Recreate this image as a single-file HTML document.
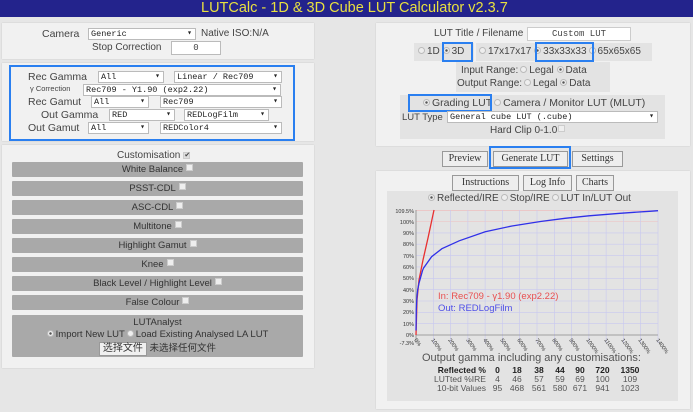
<!DOCTYPE html>
<html><head><meta charset="utf-8"><style>
*{box-sizing:border-box;margin:0;padding:0}
body{width:693px;height:412px;background:#e6e6e6;font-family:"Liberation Sans","Noto Sans CJK SC",sans-serif;font-size:10px;color:#444;position:relative;overflow:hidden}
.a{position:absolute;white-space:nowrap}
.hdr{left:0;top:0;width:693px;height:17px;background:#23238c}
.title{left:201px;top:0px;color:#e8e040;font-size:14.5px}
.pan{background:#f1f1f1;box-shadow:0 0 1px #bbb}
.sel{background:#fff;border:1px solid #bbb;font-family:"Liberation Mono",monospace;font-size:8.5px;color:#222;padding-left:2px;line-height:10px;height:12px}
.sel:after{content:"▾";position:absolute;right:3px;top:0;font-size:8px}
.blue{border:2px solid #2a7ff0}
.row{left:12px;width:291px;height:15px;background:#a9a9a9;text-align:center;line-height:15px;font-size:9.5px;color:#333;border-radius:1px}
.cb{display:inline-block;width:7px;height:7px;background:#eee;border:1px solid #ccc;margin-left:3px;vertical-align:1px}
.rd{display:inline-block;width:7px;height:7px;border-radius:50%;background:#eee;border:1px solid #bbb;margin-right:2px;vertical-align:0}
.rd.on{background:radial-gradient(#555 30%,#eee 40%)}
.btn{background:#eee;border:1px solid #999;font-family:"Liberation Serif",serif;font-size:10px;color:#333;text-align:center;line-height:14px;height:16px}
.gb{background:#e3e3e3}
</style></head><body>
<div class="a hdr"></div>
<div class="a title">LUTCalc - 1D &amp; 3D Cube LUT Calculator v2.3.7</div>

<div class="a pan" style="left:2px;top:23px;width:312px;height:36px"></div>
<div class="a" style="left:42px;top:28px;font-size:10.5px">Camera</div>
<div class="a sel" style="left:88px;top:28px;width:108px">Generic</div>
<div class="a" style="left:201px;top:28px;font-size:10px">Native ISO:N/A</div>
<div class="a" style="left:92px;top:42px;font-size:10px">Stop Correction</div>
<div class="a" style="left:171px;top:41px;width:50px;height:14px;background:#fff;border:1px solid #bbb;text-align:center;font-size:9px;font-family:'Liberation Mono',monospace;line-height:12px">0</div>

<div class="a pan" style="left:2px;top:63px;width:312px;height:78px"></div>
<div class="a blue" style="left:9px;top:65px;width:286px;height:76px"></div>
<div class="a" style="left:28px;top:71px;font-size:10.5px">Rec Gamma</div>
<div class="a sel" style="left:98px;top:71px;width:66px">All</div>
<div class="a sel" style="left:174px;top:71px;width:108px">Linear / Rec709</div>
<div class="a" style="left:30px;top:84px;font-size:7.5px">γ Correction</div>
<div class="a sel" style="left:83px;top:84px;width:198px">Rec709 - Y1.90 (exp2.22)</div>
<div class="a" style="left:28px;top:96px;font-size:10.5px">Rec Gamut</div>
<div class="a sel" style="left:91px;top:96px;width:58px">All</div>
<div class="a sel" style="left:160px;top:96px;width:122px">Rec709</div>
<div class="a" style="left:41px;top:109px;font-size:10.5px">Out Gamma</div>
<div class="a sel" style="left:109px;top:109px;width:66px">RED</div>
<div class="a sel" style="left:184px;top:109px;width:85px">REDLogFilm</div>
<div class="a" style="left:28px;top:122px;font-size:10.5px">Out Gamut</div>
<div class="a sel" style="left:88px;top:122px;width:61px">All</div>
<div class="a sel" style="left:160px;top:122px;width:122px">REDColor4</div>

<div class="a pan" style="left:2px;top:145px;width:312px;height:223px"></div>
<div class="a" style="left:117px;top:150px;font-size:10px">Customisation<span class="cb" style="background:#ddd;font-size:7px;line-height:5px;text-align:center">✔</span></div>
<div class="a row" style="top:162px">White Balance<span class="cb"></span></div>
<div class="a row" style="top:181px">PSST-CDL<span class="cb"></span></div>
<div class="a row" style="top:200px">ASC-CDL<span class="cb"></span></div>
<div class="a row" style="top:219px">Multitone<span class="cb"></span></div>
<div class="a row" style="top:238px">Highlight Gamut<span class="cb"></span></div>
<div class="a row" style="top:257px">Knee<span class="cb"></span></div>
<div class="a row" style="top:276px">Black Level / Highlight Level<span class="cb"></span></div>
<div class="a row" style="top:295px">False Colour<span class="cb"></span></div>
<div class="a row" style="top:315px;height:42px;line-height:12px;padding-top:2px">LUTAnalyst<br><span class="rd on"></span>Import New LUT<span class="rd" style="margin-left:2px"></span>Load Existing Analysed LA LUT<br><span style="display:inline-block;background:#f0f0f0;border:1px solid #999;padding:0 3px;margin-top:1px;font-size:10px">选择文件</span> 未选择任何文件</div>

<div class="a pan" style="left:376px;top:23px;width:314px;height:123px"></div>
<div class="a" style="left:434px;top:28px;font-size:10px">LUT Title / Filename</div>
<div class="a" style="left:527px;top:27px;width:104px;height:14px;background:#fff;border:1px solid #ccc;text-align:center;font-family:'Liberation Mono',monospace;font-size:9px;line-height:13px">Custom LUT</div>
<div class="a gb" style="left:414px;top:43px;width:60px;height:18px"></div>
<div class="a gb" style="left:476px;top:43px;width:176px;height:18px"></div>
<div class="a" style="left:418px;top:46px;font-size:10px"><span class="rd"></span>1D <span class="rd on"></span>3D</div>
<div class="a" style="left:479px;top:46px;font-size:10px"><span class="rd"></span>17x17x17 <span class="rd on"></span>33x33x33<span class="rd" style="margin-left:2px"></span>65x65x65</div>
<div class="a blue" style="left:442px;top:42px;width:31px;height:20px"></div>
<div class="a blue" style="left:535px;top:42px;width:59px;height:20px"></div>
<div class="a gb" style="left:456px;top:62px;width:154px;height:30px"></div>
<div class="a" style="left:461px;top:65px;font-size:10px">Input Range:<span class="rd" style="margin-left:2px"></span>Legal <span class="rd on"></span>Data</div>
<div class="a" style="left:457px;top:78px;font-size:10px">Output Range:<span class="rd" style="margin-left:2px"></span>Legal <span class="rd on"></span>Data</div>
<div class="a gb" style="left:400px;top:95px;width:265px;height:44px"></div>
<div class="a" style="left:423px;top:97px;font-size:10.5px"><span class="rd on"></span>Grading LUT<span class="rd" style="margin-left:2px"></span>Camera / Monitor LUT (MLUT)</div>
<div class="a blue" style="left:408px;top:94px;width:84px;height:18px"></div>
<div class="a" style="left:402px;top:112px;font-size:9.5px">LUT Type</div>
<div class="a sel" style="left:447px;top:111px;width:211px">General cube LUT (.cube)</div>
<div class="a" style="left:490px;top:125px;font-size:10px">Hard Clip 0-1.0<span class="cb" style="margin-left:1px"></span></div>

<div class="a btn" style="left:442px;top:151px;width:46px">Preview</div>
<div class="a btn" style="left:493px;top:151px;width:75px">Generate LUT</div>
<div class="a blue" style="left:489px;top:146px;width:82px;height:23px"></div>
<div class="a btn" style="left:572px;top:151px;width:51px">Settings</div>

<div class="a pan" style="left:376px;top:171px;width:314px;height:238px"></div>
<div class="a btn" style="left:452px;top:175px;width:67px">Instructions</div>
<div class="a btn" style="left:523px;top:175px;width:49px">Log Info</div>
<div class="a btn" style="left:576px;top:175px;width:38px">Charts</div>
<div class="a gb" style="left:387px;top:191px;width:291px;height:210px"></div>
<div class="a" style="left:428px;top:193px;font-size:10px"><span class="rd on"></span>Reflected/IRE<span class="rd" style="margin-left:2px"></span>Stop/IRE<span class="rd" style="margin-left:2px"></span>LUT In/LUT Out</div>

<svg class="a" style="left:0;top:0" width="693" height="412">
<g stroke="#c8c8f0" stroke-width="0.6">
<line x1="416" y1="210.7" x2="658" y2="210.7" stroke="#f0b8b8"/>
<line x1="416" y1="221.5" x2="658" y2="221.5" stroke="#f0c0c0"/>
<line x1="416" y1="232.9" x2="658" y2="232.9"/><line x1="416" y1="244.2" x2="658" y2="244.2"/>
<line x1="416" y1="255.6" x2="658" y2="255.6"/><line x1="416" y1="266.9" x2="658" y2="266.9"/>
<line x1="416" y1="278.3" x2="658" y2="278.3"/><line x1="416" y1="289.6" x2="658" y2="289.6"/>
<line x1="416" y1="301" x2="658" y2="301"/><line x1="416" y1="312.3" x2="658" y2="312.3"/>
<line x1="416" y1="323.7" x2="658" y2="323.7"/>
<line x1="433.3" y1="210" x2="433.3" y2="343"/><line x1="450.6" y1="210" x2="450.6" y2="343"/>
<line x1="467.9" y1="210" x2="467.9" y2="343"/><line x1="485.1" y1="210" x2="485.1" y2="343"/>
<line x1="502.4" y1="210" x2="502.4" y2="343"/><line x1="519.7" y1="210" x2="519.7" y2="343"/>
<line x1="537" y1="210" x2="537" y2="343"/><line x1="554.3" y1="210" x2="554.3" y2="343"/>
<line x1="571.6" y1="210" x2="571.6" y2="343"/><line x1="588.9" y1="210" x2="588.9" y2="343"/>
<line x1="606.1" y1="210" x2="606.1" y2="343"/><line x1="623.4" y1="210" x2="623.4" y2="343"/>
<line x1="640.7" y1="210" x2="640.7" y2="343"/><line x1="658" y1="210" x2="658" y2="343"/>
</g>
<line x1="416" y1="335" x2="658" y2="335" stroke="#888" stroke-width="0.8"/>
<line x1="416" y1="210" x2="416" y2="343" stroke="#888" stroke-width="0.8"/>
<polyline fill="none" stroke="#e83030" stroke-width="1.3" points="416,335 416.5,318 417,300 419,280 423,260 428,238 434,210"/>
<polyline fill="none" stroke="#3030e8" stroke-width="1.3" points="416,330.5 416.2,318 416.3,310 416.9,297.5 417.7,289.6 419.1,282.8 422.6,270.3 423.6,268 431.6,256.7 441.9,248.7 459.2,240.8 485.2,231.7 512,226 540.5,221.5 565,218.3 588.9,215.8 620,213.3 649.4,211.3 658,210.7"/>
<g font-family="Liberation Sans" font-size="5.5" fill="#333" text-anchor="end">
<text x="414" y="213">109.5%</text><text x="414" y="224">100%</text><text x="414" y="235">90%</text>
<text x="414" y="246">80%</text><text x="414" y="258">70%</text><text x="414" y="269">60%</text>
<text x="414" y="280">50%</text><text x="414" y="292">40%</text><text x="414" y="303">30%</text>
<text x="414" y="314">20%</text><text x="414" y="326">10%</text><text x="414" y="337">0%</text>
<text x="414" y="345">-7.3%</text>
</g>
<g font-family="Liberation Sans" font-size="5.5" fill="#333">
<text transform="translate(414,340) rotate(55)">0%</text>
<text transform="translate(431,340) rotate(55)">100%</text>
<text transform="translate(448,340) rotate(55)">200%</text>
<text transform="translate(466,340) rotate(55)">300%</text>
<text transform="translate(483,340) rotate(55)">400%</text>
<text transform="translate(500,340) rotate(55)">500%</text>
<text transform="translate(517,340) rotate(55)">600%</text>
<text transform="translate(535,340) rotate(55)">700%</text>
<text transform="translate(552,340) rotate(55)">800%</text>
<text transform="translate(569,340) rotate(55)">900%</text>
<text transform="translate(586,340) rotate(55)">1000%</text>
<text transform="translate(604,340) rotate(55)">1100%</text>
<text transform="translate(621,340) rotate(55)">1200%</text>
<text transform="translate(638,340) rotate(55)">1300%</text>
<text transform="translate(656,340) rotate(55)">1400%</text>
</g>
<text x="438" y="299" font-family="Liberation Sans" font-size="9.5" fill="#e85050">In: Rec709 - γ1.90 (exp2.22)</text>
<text x="438" y="311" font-family="Liberation Sans" font-size="9.5" fill="#5050e8">Out: REDLogFilm</text>
</svg>

<div class="a" style="left:422px;top:352px;font-size:11px;color:#555">Output gamma including any customisations:</div>
<table class="a" style="left:434px;top:366px;border-collapse:collapse;font-size:8.5px;color:#555;line-height:9px">
<tr style="font-weight:bold;color:#222"><td style="width:50px;text-align:right;padding-right:3px">Reflected %</td><td style="width:17px;text-align:center">0</td><td style="width:22px;text-align:center">18</td><td style="width:22px;text-align:center">38</td><td style="width:20px;text-align:center">44</td><td style="width:20px;text-align:center">90</td><td style="width:25px;text-align:center">720</td><td style="width:30px;text-align:center">1350</td></tr>
<tr><td style="text-align:right;padding-right:3px">LUTted %IRE</td><td style="text-align:center">4</td><td style="text-align:center">46</td><td style="text-align:center">57</td><td style="text-align:center">59</td><td style="text-align:center">69</td><td style="text-align:center">100</td><td style="text-align:center">109</td></tr>
<tr><td style="text-align:right;padding-right:3px">10-bit Values</td><td style="text-align:center">95</td><td style="text-align:center">468</td><td style="text-align:center">561</td><td style="text-align:center">580</td><td style="text-align:center">671</td><td style="text-align:center">941</td><td style="text-align:center">1023</td></tr>
</table>
</body></html>
